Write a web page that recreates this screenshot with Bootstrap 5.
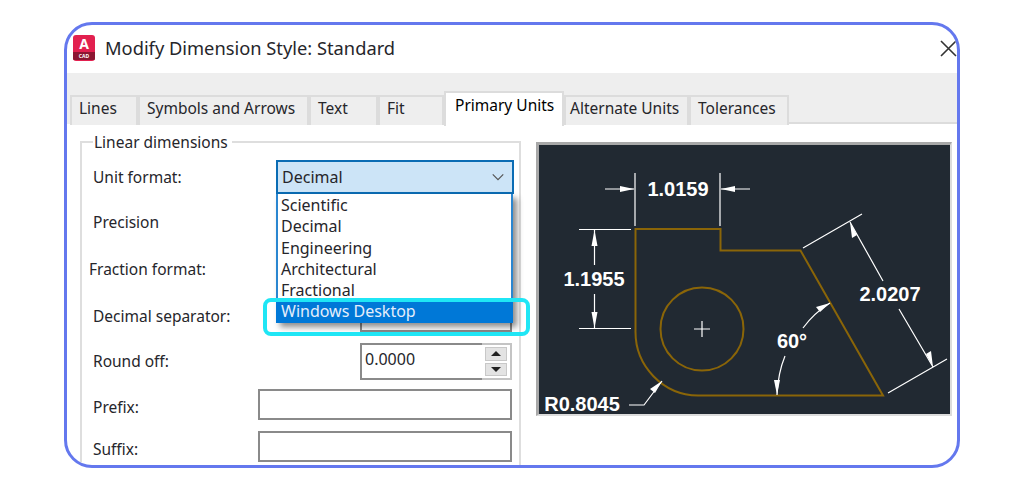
<!DOCTYPE html>
<html lang="en">

<head>
  <meta charset="UTF-8">
  <title>Modify Dimension Style</title>
  <link href="https://cdn.jsdelivr.net/npm/bootstrap@5.3.3/dist/css/bootstrap.min.css" rel="stylesheet">

  <style>
    body {
      background-color: #fff;
      color: #26262b;
      font-family: "Noto Sans", sans-serif;
      font-size: 16px;
      overflow: hidden;
    }

    .dlg-frame {
      position: relative;
      width: 896px;
      height: 446px;
      margin: 22px 0 0 64px;
      border: 3px solid #6478ee;
      border-radius: 28px;
      overflow: hidden;
      background-color: #fff;
    }

    .dlg-title {
      height: 46px;
      padding-left: 6px;
      font-size: 18.3px;
      gap: 10px;
    }

    .app-icon {
      width: 22px;
      height: 26px;
      border-radius: 3px;
      background-color: #e2204f;
      color: #fff;
      font-size: 14px;
      font-weight: 700;
      line-height: 17px;
      text-align: center;
      overflow: hidden;
    }

    .app-icon span {
      display: block;
      height: 8px;
      background-color: #8c1632;
      font-size: 5px;
      line-height: 8px;
    }

    .dlg-close {
      position: absolute;
      top: 15px;
      right: 0;
    }

    .tab-strip {
      height: 51px;
      margin-top: 2px;
      padding: 18px 0 0 3px;
      background-color: #eee;
    }

    .tab-strip .nav-tabs {
      height: 33px;
      align-items: flex-end;
      border-bottom: 2px solid #dcdcdc;
      --bs-nav-tabs-border-radius: 0;
    }

    .tab-strip .nav-link {
      height: 30px;
      margin: 0 0 -1px;
      padding: 0 0 0 7px;
      border: 2px solid #dcdcdc;
      border-bottom: 0;
      color: #26262b;
      background-color: #eee;
      font-size: 15.5px;
      white-space: nowrap;
    }

    .tab-strip .nav-link.active {
      height: 35px;
      padding: 1px 0 0 9px;
      border-color: #dcdcdc;
      background-color: #fff;
      margin-bottom: -2px;
    }

    .tab-strip .nav-item:nth-child(1) .nav-link { width: 68px; }
    .tab-strip .nav-item:nth-child(2) .nav-link { width: 171px; }
    .tab-strip .nav-item:nth-child(3) .nav-link { width: 69px; }
    .tab-strip .nav-item:nth-child(4) .nav-link { width: 66px; }
    .tab-strip .nav-item:nth-child(5) .nav-link { width: 120px; }
    .tab-strip .nav-item:nth-child(6) .nav-link { width: 125px; padding-left: 4px; }
    .tab-strip .nav-item:nth-child(7) .nav-link { width: 100px; }

    .dim-group {
      flex: 0 0 441px;
      height: 400px;
      margin: 8px 0 0 13px;
      padding: 0 5px 0 11px;
      border: 2px solid #dedede;
    }

    .dim-group legend {
      float: none;
      width: auto;
      margin: 0;
      padding: 0 4px 0 1px;
      font-size: 15.5px;
      line-height: 20px;
    }

    .dim-row {
      position: relative;
      height: 32px;
      margin-top: 15px;
      font-size: 15.5px;
    }

    .dim-row:first-of-type { height: 34px; margin-top: 8px; }
    .row-precision { margin-top: 12px; }
    .row-fraction { margin-left: -4px; }
    .row-round { height: 37px; margin-top: 11px; }
    .row-prefix { height: 31px; margin-top: 9px; }
    .row-suffix { height: 31px; margin-top: 11px; }

    .dim-label { margin-right: auto; padding-top: 2px; }
    .row-round .dim-label { padding-top: 0; }
    .row-prefix .dim-label { padding-top: 6px; }
    .row-suffix .dim-label { padding-top: 7px; }

    .unit-select {
      width: 238px;
      height: 34px;
      padding: 0 30px 0 4px;
      border: 2px solid #0a6cb4;
      border-radius: 0;
      color: #26262b;
      background-color: #cce4f7;
      background-image: url("data:image/svg+xml,%3csvg xmlns='http://www.w3.org/2000/svg' viewBox='0 0 16 16'%3e%3cpath fill='none' stroke='%23555' stroke-width='1.4' d='M2 5l6 6 6-6'/%3e%3c/svg%3e");
      background-position: right 7px center;
      background-size: 14px 14px;
      font-size: 16px;
    }

    .dim-box {
      height: 100%;
      padding: 0 4px;
      border: 2px solid #8a8a8a;
      border-radius: 0;
      font-size: 16px;
      color: #26262b;
      background-color: #fff;
    }

    .box-mid { width: 235px; margin-right: 2px; }
    .box-short { width: 152px; margin-right: 2px; }
    .box-wide { width: 254px; margin-right: 2px; }

    .spin-wrap {
      width: 152px;
      height: 100%;
      margin-right: 2px;
    }

    .spin-wrap .dim-box {
      flex: 1;
      border-right: 0;
      padding: 0 3px;
      line-height: 28px;
    }

    .spin-btns {
      width: 30px;
      padding: 2px 3px;
      gap: 2px;
      border: 2px solid #c4c4c4;
      border-left: 0;
    }

    .spin-btn {
      flex: 1;
      background-color: #e3e3e3;
      border: 1px solid #c8c8c8;
    }

    .tri-up, .tri-down {
      width: 0;
      height: 0;
      border-left: 5px solid transparent;
      border-right: 5px solid transparent;
    }

    .tri-up { border-bottom: 5px solid #222; }
    .tri-down { border-top: 5px solid #222; }

    .unit-menu.dropdown-menu {
      top: 100%;
      left: 183px;
      width: 237px;
      min-width: 0;
      padding: 1px 0 0;
      margin: 0;
      border: 0;
      border-left: 2px solid #2a86d0;
      border-right: 2px solid #2a86d0;
      border-radius: 0;
      background-color: #fff;
      box-shadow: 4px 4px 6px rgba(0, 0, 0, .45);
      z-index: 5;
    }

    .unit-menu .dropdown-item {
      height: 21.3px;
      padding: 0 0 0 3px;
      color: #26262b;
      font-size: 16px;
      line-height: 21.3px;
    }

    .unit-menu .dropdown-item.active {
      height: 22px;
      margin: 0 -2px;
      padding-left: 5px;
      width: 237px;
      color: #e4eefb;
      background-color: #0078d7;
      line-height: 21px;
    }

    .cyan-ring {
      position: absolute;
      left: 196px;
      top: 273px;
      width: 267px;
      height: 38px;
      border: 4px solid #1fe6f5;
      border-radius: 8px;
      z-index: 6;
      pointer-events: none;
    }

    .dim-preview {
      flex: 0 0 416px;
      width: 416px;
      height: 274px;
      margin: 18px 0 0 15px;
      border-top: 3px solid #a8a8a8;
      border-left: 3px solid #a8a8a8;
      border-right: 2px solid #dcdcdc;
      border-bottom: 2px solid #dcdcdc;
      background-color: #212932;
    }

    .dim-preview svg {
      display: block;
      width: 100%;
      height: 100%;
    }

    .dim-preview text {
      fill: #fff;
      font-family: "Liberation Sans", sans-serif;
      font-size: 20px;
      font-weight: 700;
      text-anchor: middle;
    }
  </style>
</head>

<body>
  <div class="dlg-frame">
    <div class="dlg-title d-flex align-items-center">
      <div class="app-icon flex-shrink-0">A<span>CAD</span></div>
      <div>Modify Dimension Style: Standard</div>
    </div>
    <svg class="dlg-close" width="17" height="17" viewBox="0 0 17 17">
      <path d="M1 1l15 15M16 1L1 16" stroke="#333" stroke-width="1.6" fill="none" />
    </svg>

    <div class="tab-strip">
      <ul class="nav nav-tabs">
        <li class="nav-item"><a class="nav-link" href="#">Lines</a></li>
        <li class="nav-item"><a class="nav-link" href="#">Symbols and Arrows</a></li>
        <li class="nav-item"><a class="nav-link" href="#">Text</a></li>
        <li class="nav-item"><a class="nav-link" href="#">Fit</a></li>
        <li class="nav-item"><a class="nav-link active" href="#">Primary Units</a></li>
        <li class="nav-item"><a class="nav-link" href="#">Alternate Units</a></li>
        <li class="nav-item"><a class="nav-link" href="#">Tolerances</a></li>
      </ul>
    </div>

    <div class="d-flex">
      <fieldset class="dim-group">
        <legend>Linear dimensions</legend>

        <div class="dim-row d-flex align-items-center">
          <span class="dim-label">Unit format:</span>
          <select class="form-select unit-select">
            <option>Decimal</option>
          </select>
          <ul class="dropdown-menu show unit-menu list-unstyled">
            <li><a class="dropdown-item" href="#">Scientific</a></li>
            <li><a class="dropdown-item" href="#">Decimal</a></li>
            <li><a class="dropdown-item" href="#">Engineering</a></li>
            <li><a class="dropdown-item" href="#">Architectural</a></li>
            <li><a class="dropdown-item" href="#">Fractional</a></li>
            <li><a class="dropdown-item active" href="#">Windows Desktop</a></li>
          </ul>
        </div>

        <div class="dim-row row-precision d-flex align-items-center">
          <span class="dim-label">Precision</span>
          <div class="dim-box box-mid"></div>
        </div>

        <div class="dim-row row-fraction d-flex align-items-center">
          <span class="dim-label">Fraction format:</span>
          <div class="dim-box box-mid"></div>
        </div>

        <div class="dim-row d-flex align-items-center">
          <span class="dim-label">Decimal separator:</span>
          <div class="dim-box box-short"></div>
        </div>

        <div class="dim-row row-round d-flex align-items-center">
          <span class="dim-label">Round off:</span>
          <div class="spin-wrap d-flex">
            <div class="dim-box">0.0000</div>
            <div class="spin-btns d-flex flex-column">
              <div class="spin-btn d-flex align-items-center justify-content-center"><div class="tri-up"></div></div>
              <div class="spin-btn d-flex align-items-center justify-content-center"><div class="tri-down"></div></div>
            </div>
          </div>
        </div>

        <div class="dim-row row-prefix d-flex align-items-center">
          <span class="dim-label">Prefix:</span>
          <div class="dim-box box-wide"></div>
        </div>

        <div class="dim-row row-suffix d-flex align-items-center">
          <span class="dim-label">Suffix:</span>
          <div class="dim-box box-wide"></div>
        </div>
      </fieldset>

      <div class="dim-preview">
        <svg viewBox="539 145 411 269">
          <!-- part outline -->
          <path d="M635.5 229H720.5V250.5H800.5L883 395.5H698C663 395 635 366 635.5 331Z" fill="none" stroke="#8a6508" stroke-width="2" />
          <circle cx="702" cy="329" r="41.5" fill="none" stroke="#8a6508" stroke-width="2" />
          <path d="M694 329h16M702 321v16" stroke="#fff" stroke-width="1.2" />

          <!-- dimension lines -->
          <g stroke="#fff" stroke-width="1.2" fill="none">
            <path d="M635 173V226M720 173V226M605 189H634M721 189H750" />
            <path d="M579 229.5H631M579 328.5H631M594.5 230V265M594.5 294V328" />
            <path d="M803 248L862 214M888 393L947 359M850 222L883 281M899 309L933 367" />
            <path d="M803 328Q814 313 830 303M785 356Q778 373 777 395" />
            <path d="M629 405H644L662 381" />
          </g>

          <!-- arrow heads -->
          <g fill="#fff">
            <path d="M634 189L620 186V192Z" />
            <path d="M721 189L735 186V192Z" />
            <path d="M594.5 230L591.5 246H597.5Z" />
            <path d="M594.5 328L591.5 312H597.5Z" />
            <path d="M850 222L852 238L857 235Z" />
            <path d="M933 367L931 351L926 354Z" />
            <path d="M830 303L816 307L820 312Z" />
            <path d="M777 395L774 380H780Z" />
            <path d="M662 381L650 389L655 393Z" />
          </g>

          <text x="678" y="196">1.0159</text>
          <text x="594" y="286">1.1955</text>
          <text x="890" y="301">2.0207</text>
          <text x="792" y="348">60°</text>
          <text x="582" y="411">R0.8045</text>
        </svg>
      </div>
    </div>

    <div class="cyan-ring"></div>
  </div>

  <script src="https://cdn.jsdelivr.net/npm/bootstrap@5.3.3/dist/js/bootstrap.bundle.min.js"></script>
</body>

</html>
